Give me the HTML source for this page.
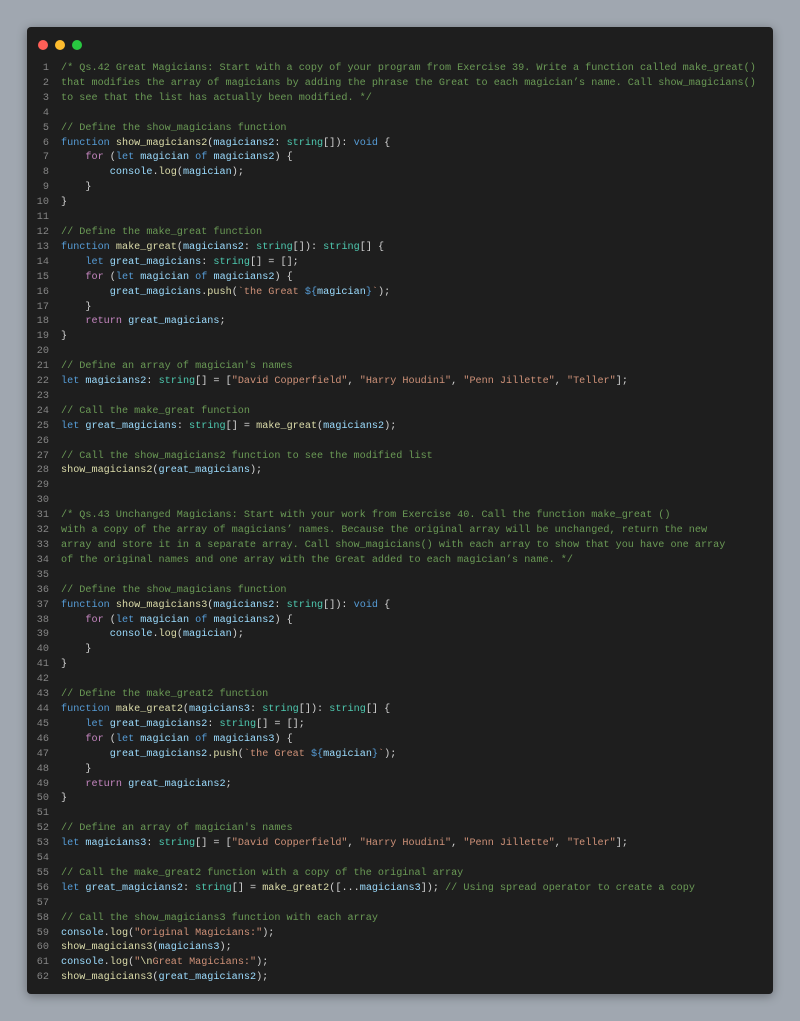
<!DOCTYPE html>
<html><head><meta charset="utf-8"><style>
body{margin:0;width:800px;height:1021px;background:#a0a7b0;position:relative;overflow:hidden}
.win{position:absolute;left:27px;top:27px;width:746px;height:967px;background:#1e1e1e;border-radius:4px;box-shadow:0 2px 10px rgba(0,0,0,.35)}
.d{position:absolute;top:13px;width:10px;height:10px;border-radius:50%}
pre{position:absolute;left:0;top:35px;margin:0;font-family:"Liberation Mono",monospace;font-size:10.16px;line-height:14.91px;color:#d4d4d4;white-space:pre}
.n{display:inline-block;width:22px;text-align:right;color:#858585;margin-right:12px}
.c{color:#6a9955}.k{color:#569cd6}.p{color:#c586c0}.f{color:#dcdcaa}.v{color:#9cdcfe}.t{color:#4ec9b0}.s{color:#ce9178}
</style></head><body>
<div class="win">
<div class="d" style="left:11px;background:#ff5f57"></div>
<div class="d" style="left:28px;background:#febc2e"></div>
<div class="d" style="left:45px;background:#28c840"></div>
<pre><span class="n">1</span><span class="c">/* Qs.42 Great Magicians: Start with a copy of your program from Exercise 39. Write a function called make_great()</span>
<span class="n">2</span><span class="c">that modifies the array of magicians by adding the phrase the Great to each magician’s name. Call show_magicians()</span>
<span class="n">3</span><span class="c">to see that the list has actually been modified. */</span>
<span class="n">4</span>
<span class="n">5</span><span class="c">// Define the show_magicians function</span>
<span class="n">6</span><span class="k">function</span> <span class="f">show_magicians2</span>(<span class="v">magicians2</span>: <span class="t">string</span>[]): <span class="k">void</span> {
<span class="n">7</span>    <span class="p">for</span> (<span class="k">let</span> <span class="v">magician</span> <span class="k">of</span> <span class="v">magicians2</span>) {
<span class="n">8</span>        <span class="v">console</span>.<span class="f">log</span>(<span class="v">magician</span>);
<span class="n">9</span>    }
<span class="n">10</span>}
<span class="n">11</span>
<span class="n">12</span><span class="c">// Define the make_great function</span>
<span class="n">13</span><span class="k">function</span> <span class="f">make_great</span>(<span class="v">magicians2</span>: <span class="t">string</span>[]): <span class="t">string</span>[] {
<span class="n">14</span>    <span class="k">let</span> <span class="v">great_magicians</span>: <span class="t">string</span>[] = [];
<span class="n">15</span>    <span class="p">for</span> (<span class="k">let</span> <span class="v">magician</span> <span class="k">of</span> <span class="v">magicians2</span>) {
<span class="n">16</span>        <span class="v">great_magicians</span>.<span class="f">push</span>(<span class="s">`the Great </span><span class="k">${</span><span class="v">magician</span><span class="k">}</span><span class="s">`</span>);
<span class="n">17</span>    }
<span class="n">18</span>    <span class="p">return</span> <span class="v">great_magicians</span>;
<span class="n">19</span>}
<span class="n">20</span>
<span class="n">21</span><span class="c">// Define an array of magician's names</span>
<span class="n">22</span><span class="k">let</span> <span class="v">magicians2</span>: <span class="t">string</span>[] = [<span class="s">"David Copperfield"</span>, <span class="s">"Harry Houdini"</span>, <span class="s">"Penn Jillette"</span>, <span class="s">"Teller"</span>];
<span class="n">23</span>
<span class="n">24</span><span class="c">// Call the make_great function</span>
<span class="n">25</span><span class="k">let</span> <span class="v">great_magicians</span>: <span class="t">string</span>[] = <span class="f">make_great</span>(<span class="v">magicians2</span>);
<span class="n">26</span>
<span class="n">27</span><span class="c">// Call the show_magicians2 function to see the modified list</span>
<span class="n">28</span><span class="f">show_magicians2</span>(<span class="v">great_magicians</span>);
<span class="n">29</span>
<span class="n">30</span>
<span class="n">31</span><span class="c">/* Qs.43 Unchanged Magicians: Start with your work from Exercise 40. Call the function make_great ()</span>
<span class="n">32</span><span class="c">with a copy of the array of magicians’ names. Because the original array will be unchanged, return the new</span>
<span class="n">33</span><span class="c">array and store it in a separate array. Call show_magicians() with each array to show that you have one array</span>
<span class="n">34</span><span class="c">of the original names and one array with the Great added to each magician’s name. */</span>
<span class="n">35</span>
<span class="n">36</span><span class="c">// Define the show_magicians function</span>
<span class="n">37</span><span class="k">function</span> <span class="f">show_magicians3</span>(<span class="v">magicians2</span>: <span class="t">string</span>[]): <span class="k">void</span> {
<span class="n">38</span>    <span class="p">for</span> (<span class="k">let</span> <span class="v">magician</span> <span class="k">of</span> <span class="v">magicians2</span>) {
<span class="n">39</span>        <span class="v">console</span>.<span class="f">log</span>(<span class="v">magician</span>);
<span class="n">40</span>    }
<span class="n">41</span>}
<span class="n">42</span>
<span class="n">43</span><span class="c">// Define the make_great2 function</span>
<span class="n">44</span><span class="k">function</span> <span class="f">make_great2</span>(<span class="v">magicians3</span>: <span class="t">string</span>[]): <span class="t">string</span>[] {
<span class="n">45</span>    <span class="k">let</span> <span class="v">great_magicians2</span>: <span class="t">string</span>[] = [];
<span class="n">46</span>    <span class="p">for</span> (<span class="k">let</span> <span class="v">magician</span> <span class="k">of</span> <span class="v">magicians3</span>) {
<span class="n">47</span>        <span class="v">great_magicians2</span>.<span class="f">push</span>(<span class="s">`the Great </span><span class="k">${</span><span class="v">magician</span><span class="k">}</span><span class="s">`</span>);
<span class="n">48</span>    }
<span class="n">49</span>    <span class="p">return</span> <span class="v">great_magicians2</span>;
<span class="n">50</span>}
<span class="n">51</span>
<span class="n">52</span><span class="c">// Define an array of magician's names</span>
<span class="n">53</span><span class="k">let</span> <span class="v">magicians3</span>: <span class="t">string</span>[] = [<span class="s">"David Copperfield"</span>, <span class="s">"Harry Houdini"</span>, <span class="s">"Penn Jillette"</span>, <span class="s">"Teller"</span>];
<span class="n">54</span>
<span class="n">55</span><span class="c">// Call the make_great2 function with a copy of the original array</span>
<span class="n">56</span><span class="k">let</span> <span class="v">great_magicians2</span>: <span class="t">string</span>[] = <span class="f">make_great2</span>([...<span class="v">magicians3</span>]); <span class="c">// Using spread operator to create a copy</span>
<span class="n">57</span>
<span class="n">58</span><span class="c">// Call the show_magicians3 function with each array</span>
<span class="n">59</span><span class="v">console</span>.<span class="f">log</span>(<span class="s">"Original Magicians:"</span>);
<span class="n">60</span><span class="f">show_magicians3</span>(<span class="v">magicians3</span>);
<span class="n">61</span><span class="v">console</span>.<span class="f">log</span>(<span class="s">"</span><span class="f">\n</span><span class="s">Great Magicians:"</span>);
<span class="n">62</span><span class="f">show_magicians3</span>(<span class="v">great_magicians2</span>);</pre>
</div>
</body></html>
